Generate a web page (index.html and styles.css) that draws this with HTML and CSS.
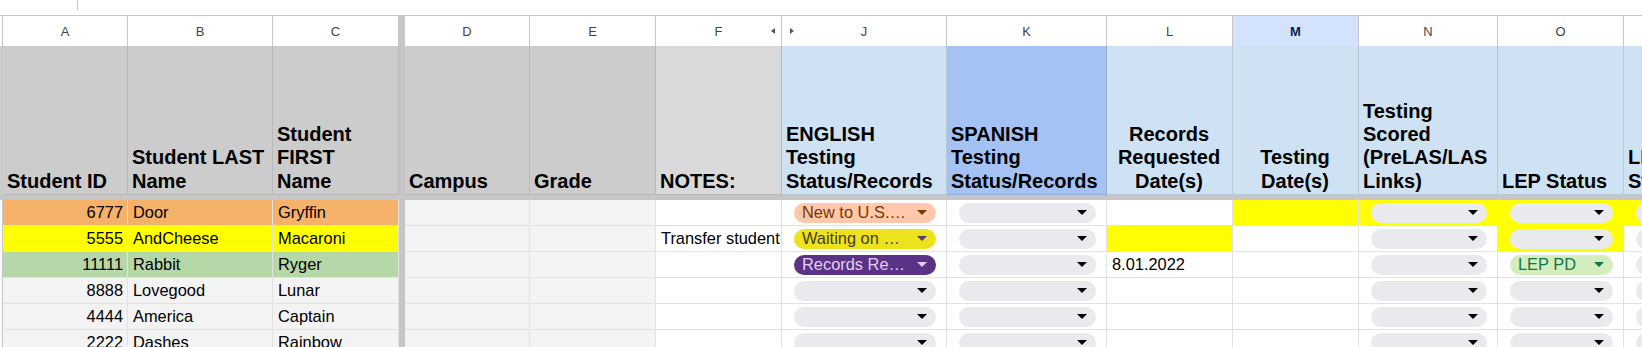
FILE: index.html
```html
<!DOCTYPE html>
<html lang="en">
<head>
  <meta charset="UTF-8" />
  <meta name="viewport" content="width=device-width, initial-scale=1.0"/>
  <title>ELL Testing Tracker</title>
  <link rel="stylesheet" href="styles.css">
</head>
<body>
  <div class="sheet">
    <!-- Barre du haut -->
    <div class="topbar"><div class="topbar-divider"></div></div>

    <!-- Lettres des colonnes -->
    <div class="row letters">
      <div class="strip"></div>
      <div class="col">A</div>
      <div class="col">B</div>
      <div class="col">C</div>
      <div class="freeze"></div>
      <div class="col">D</div>
      <div class="col">E</div>
      <div class="col hidden-left">F</div>
      <div class="col hidden-right">J</div>
      <div class="col">K</div>
      <div class="col">L</div>
      <div class="col selected">M</div>
      <div class="col">N</div>
      <div class="col">O</div>
      <div class="col">P</div>
    </div>

    <!-- En-têtes -->
    <div class="row head">
      <div class="strip"></div>
      <div class="h">Student ID</div>
      <div class="h">Student LAST Name</div>
      <div class="h">Student FIRST Name</div>
      <div class="freeze"></div>
      <div class="h">Campus</div>
      <div class="h">Grade</div>
      <div class="h h-light">NOTES:</div>
      <div class="h h-blue">ENGLISH Testing Status/Records</div>
      <div class="h h-blue-dark">SPANISH Testing Status/Records</div>
      <div class="h h-blue center">Records Requested Date(s)</div>
      <div class="h h-blue center">Testing Date(s)</div>
      <div class="h h-blue">Testing Scored (PreLAS/LAS Links)</div>
      <div class="h h-blue">LEP Status</div>
      <div class="h h-blue">LPAC Status</div>
    </div>

    <div class="freeze-row"></div>

    <!-- Lignes -->
    <div class="row">
      <div class="strip"></div>
      <div class="c num orange">6777</div>
      <div class="c orange">Door</div>
      <div class="c orange">Gryffin</div>
      <div class="freeze"></div>
      <div class="c grey"></div>
      <div class="c grey"></div>
      <div class="c"></div>
      <div class="c drop"><span class="chip chip-new"><span class="chip-text">New to U.S.…</span></span></div>
      <div class="c drop"><span class="chip"><span class="chip-text"></span></span></div>
      <div class="c"></div>
      <div class="c yellow"></div>
      <div class="c drop yellow"><span class="chip"><span class="chip-text"></span></span></div>
      <div class="c drop yellow"><span class="chip"><span class="chip-text"></span></span></div>
      <div class="c drop yellow"><span class="chip"><span class="chip-text"></span></span></div>
    </div>

    <div class="row">
      <div class="strip"></div>
      <div class="c num yellow">5555</div>
      <div class="c yellow">AndCheese</div>
      <div class="c yellow">Macaroni</div>
      <div class="freeze"></div>
      <div class="c grey"></div>
      <div class="c grey"></div>
      <div class="c">Transfer student</div>
      <div class="c drop"><span class="chip chip-wait"><span class="chip-text">Waiting on …</span></span></div>
      <div class="c drop"><span class="chip"><span class="chip-text"></span></span></div>
      <div class="c yellow"></div>
      <div class="c"></div>
      <div class="c drop"><span class="chip"><span class="chip-text"></span></span></div>
      <div class="c drop yellow"><span class="chip"><span class="chip-text"></span></span></div>
      <div class="c drop"><span class="chip"><span class="chip-text"></span></span></div>
    </div>

    <div class="row">
      <div class="strip"></div>
      <div class="c num green">11111</div>
      <div class="c green">Rabbit</div>
      <div class="c green">Ryger</div>
      <div class="freeze"></div>
      <div class="c grey"></div>
      <div class="c grey"></div>
      <div class="c"></div>
      <div class="c drop"><span class="chip chip-records"><span class="chip-text">Records Re…</span></span></div>
      <div class="c drop"><span class="chip"><span class="chip-text"></span></span></div>
      <div class="c">8.01.2022</div>
      <div class="c"></div>
      <div class="c drop"><span class="chip"><span class="chip-text"></span></span></div>
      <div class="c drop"><span class="chip chip-lep"><span class="chip-text">LEP PD</span></span></div>
      <div class="c drop"><span class="chip"><span class="chip-text"></span></span></div>
    </div>

    <div class="row">
      <div class="strip"></div>
      <div class="c num grey">8888</div>
      <div class="c grey">Lovegood</div>
      <div class="c grey">Lunar</div>
      <div class="freeze"></div>
      <div class="c grey"></div>
      <div class="c grey"></div>
      <div class="c"></div>
      <div class="c drop"><span class="chip"><span class="chip-text"></span></span></div>
      <div class="c drop"><span class="chip"><span class="chip-text"></span></span></div>
      <div class="c"></div>
      <div class="c"></div>
      <div class="c drop"><span class="chip"><span class="chip-text"></span></span></div>
      <div class="c drop"><span class="chip"><span class="chip-text"></span></span></div>
      <div class="c drop"><span class="chip"><span class="chip-text"></span></span></div>
    </div>

    <div class="row">
      <div class="strip"></div>
      <div class="c num grey">4444</div>
      <div class="c grey">America</div>
      <div class="c grey">Captain</div>
      <div class="freeze"></div>
      <div class="c grey"></div>
      <div class="c grey"></div>
      <div class="c"></div>
      <div class="c drop"><span class="chip"><span class="chip-text"></span></span></div>
      <div class="c drop"><span class="chip"><span class="chip-text"></span></span></div>
      <div class="c"></div>
      <div class="c"></div>
      <div class="c drop"><span class="chip"><span class="chip-text"></span></span></div>
      <div class="c drop"><span class="chip"><span class="chip-text"></span></span></div>
      <div class="c drop"><span class="chip"><span class="chip-text"></span></span></div>
    </div>

    <div class="row">
      <div class="strip"></div>
      <div class="c num grey">2222</div>
      <div class="c grey">Dashes</div>
      <div class="c grey">Rainbow</div>
      <div class="freeze"></div>
      <div class="c grey"></div>
      <div class="c grey"></div>
      <div class="c"></div>
      <div class="c drop"><span class="chip"><span class="chip-text"></span></span></div>
      <div class="c drop"><span class="chip"><span class="chip-text"></span></span></div>
      <div class="c"></div>
      <div class="c"></div>
      <div class="c drop"><span class="chip"><span class="chip-text"></span></span></div>
      <div class="c drop"><span class="chip"><span class="chip-text"></span></span></div>
      <div class="c drop"><span class="chip"><span class="chip-text"></span></span></div>
    </div>
  </div>
</body>
</html>
```

FILE: styles.css
```css
* {
  box-sizing: border-box;
}
body {
  font-family: "Liberation Sans", Arial, sans-serif;
  margin: 0;
  background: #fff;
  overflow: hidden;
}
.sheet {
  width: 1642px;
  overflow: hidden;
}
.topbar {
  height: 16px;
  border-bottom: 1px solid #c7c7c7;
}
.topbar-divider {
  margin-left: 77px;
  width: 1px;
  height: 10px;
  background: #c7c7c7;
}
.row {
  display: grid;
  grid-template-columns: 3px 125px 145px 126px 6px 125px 126px 126px 165px 160px 126px 126px 139px 126px 126px;
  height: 26px;
}
.strip {
  background: #f8f9fa;
  border-right: 1px solid #c7c7c7;
}
.freeze {
  background: #c6c6c6;
}
.freeze-row {
  height: 5px;
  background: #c6c6c6;
}

/* Lettres */
.letters {
  height: 30px;
}
.letters .strip {
  background: #fff;
}
.col {
  position: relative;
  display: flex;
  align-items: center;
  justify-content: center;
  border-right: 1px solid #c7c7c7;
  font-size: 13px;
  color: #444;
}
.col.selected {
  background: #d3e3fd;
  color: #041e49;
  font-weight: bold;
}
.hidden-left::after,
.hidden-right::before {
  content: '';
  position: absolute;
  top: 12px;
  border-top: 3px solid transparent;
  border-bottom: 3px solid transparent;
}
.hidden-left::after {
  right: 6px;
  border-right: 4px solid #555;
}
.hidden-right::before {
  left: 8px;
  border-left: 4px solid #555;
}

/* En-têtes */
.head {
  height: 149px;
}
.head .strip {
  background: #ccc;
}
.h {
  display: flex;
  align-items: flex-end;
  padding: 0 5px 1px 4px;
  background: #ccc;
  border-right: 1px solid #b8b8b8;
  border-bottom: 1px solid #b8b8b8;
  font-size: 20px;
  line-height: 23.3px;
  font-weight: bold;
  color: #000;
}
.h-light {
  background: #d9d9d9;
}
.h-blue {
  background: #cfe2f3;
  border-color: #b9c8d6;
}
.h-blue-dark {
  background: #a4c2f4;
  border-color: #93add9;
}
.h.center {
  justify-content: center;
  text-align: center;
}

/* Cellules */
.c {
  display: flex;
  align-items: center;
  padding: 0 4px 0 5px;
  border-right: 1px solid #e2e2e2;
  border-bottom: 1px solid #e2e2e2;
  font-size: 16.4px;
  color: #000;
  white-space: nowrap;
  overflow: hidden;
}
.c.num {
  justify-content: flex-end;
}
.orange {
  background: #f6b26b;
}
.yellow {
  background: #ffff00;
}
.green {
  background: #b6d7a8;
}
.grey {
  background: #f3f3f3;
}

/* Listes déroulantes */
.c.drop {
  padding: 0 10px 0 12px;
}
.chip {
  display: flex;
  align-items: center;
  width: 100%;
  height: 20px;
  padding: 0 9px 0 8px;
  border-radius: 10px;
  background: #e8eaed;
  color: #000;
}
.chip-text {
  flex: 1;
  overflow: hidden;
}
.chip::after {
  content: '';
  border-left: 5px solid transparent;
  border-right: 5px solid transparent;
  border-top: 5px solid #000;
  margin-left: 6px;
}
.chip-new {
  background: #ffc8aa;
  color: #753800;
}
.chip-new::after {
  border-top-color: #753800;
}
.chip-wait {
  background: #ede31d;
  color: #473821;
}
.chip-wait::after {
  border-top-color: #5a3a6e;
}
.chip-records {
  background: #5a3286;
  color: #e6cff2;
}
.chip-records::after {
  border-top-color: #e6cff2;
}
.chip-lep {
  background: #d4edbc;
  color: #11734b;
}
.chip-lep::after {
  border-top-color: #11734b;
}
```
